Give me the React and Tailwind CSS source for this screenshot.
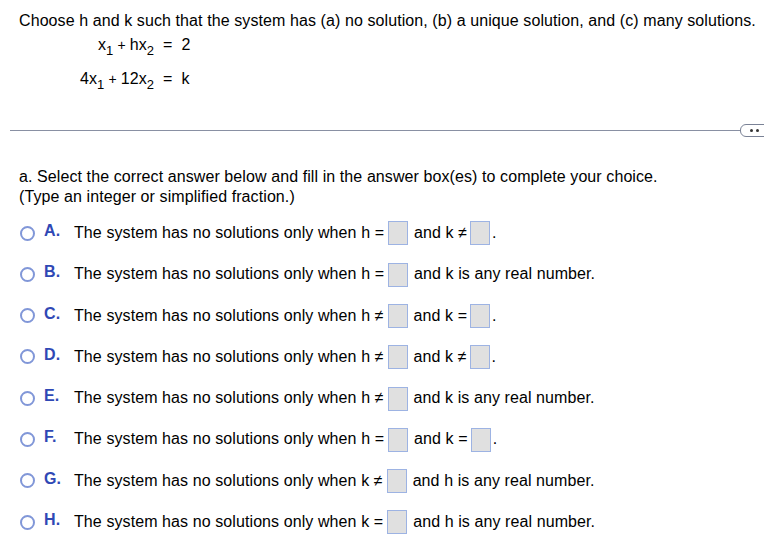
import React from 'react';

const Box = () => (
  <span className="inline-block w-[20px] h-[24px] bg-[#e0e0e0] border border-[#9db3e3] align-middle" />
);

const options = [
  { letter: 'A', pre: 'h =', mid: 'and k ≠', second: true },
  { letter: 'B', pre: 'h =', mid: 'and k is any real number.', second: false },
  { letter: 'C', pre: 'h ≠', mid: 'and k =', second: true },
  { letter: 'D', pre: 'h ≠', mid: 'and k ≠', second: true },
  { letter: 'E', pre: 'h ≠', mid: 'and k is any real number.', second: false },
  { letter: 'F', pre: 'h =', mid: 'and k =', second: true },
  { letter: 'G', pre: 'k ≠', mid: 'and h is any real number.', second: false },
  { letter: 'H', pre: 'k =', mid: 'and h is any real number.', second: false },
];

const Sub = ({ children }) => (
  <span className="text-[13px] relative top-[5px]">{children}</span>
);
const Plus = () => <span className="text-[14px] mx-[4px]">+</span>;

export default function App() {
  return (
    <div className="w-[764px] h-[541px] overflow-hidden bg-white text-black text-[16px] tracking-[0.09px] font-['Liberation_Sans',Arial,sans-serif]">
      {/* question */}
      <div className="pl-[19px] pt-[12px] leading-[18px]">
        Choose h and k such that the system has (a) no solution, (b) a unique solution, and (c) many solutions.
      </div>

      <div className="ml-[80px] mt-[5px] grid grid-cols-[auto_auto_auto] w-max gap-x-[9px] gap-y-[13px] leading-[20px]">
        <div className="text-right">
          x<Sub>1</Sub><Plus />hx<Sub>2</Sub>
        </div>
        <div>=</div>
        <div>2</div>
        <div className="text-right">
          4x<Sub>1</Sub><Plus />12x<Sub>2</Sub>
        </div>
        <div>=</div>
        <div>k</div>
      </div>

      {/* divider */}
      <div className="flex items-center mt-[33px] pl-[10px] h-[14px]">
        <div className="flex-1 h-[1px] bg-[#8990a3]" />
        <div className="w-[30px] h-[13px] -mr-[6px] border border-[#7a8296] rounded-l-[6px] bg-white flex items-center gap-[3px] pl-[9px] shrink-0">
          <span className="w-[3px] h-[3px] rounded-full bg-[#333]" />
          <span className="w-[3px] h-[3px] rounded-full bg-[#333]" />
        </div>
      </div>

      {/* part a */}
      <div className="pl-[19px] mt-[30px] leading-[20px]">
        <div>a. Select the correct answer below and fill in the answer box(es) to complete your choice.</div>
        <div>(Type an integer or simplified fraction.)</div>
      </div>

      <div className="flex flex-col gap-[17.3px] mt-[14px] pl-[20px]">
        {options.map((o) => (
          <div key={o.letter} className="flex items-center h-[24px]">
            <span className="w-[15px] h-[15px] rounded-full border-2 border-[#8197d8] shrink-0" />
            <span className="ml-[9px] w-[30px] font-bold text-[#2f48b5] relative -top-[2px]">{o.letter}.</span>
            <span>The system has no solutions only when {o.pre}</span>
            <span className="ml-[4px]"><Box /></span>
            <span className="ml-[6px]">{o.mid}</span>
            {o.second && (
              <>
                <span className="ml-[3px]"><Box /></span>
                <span className="ml-[2px]">.</span>
              </>
            )}
          </div>
        ))}
      </div>
    </div>
  );
}
